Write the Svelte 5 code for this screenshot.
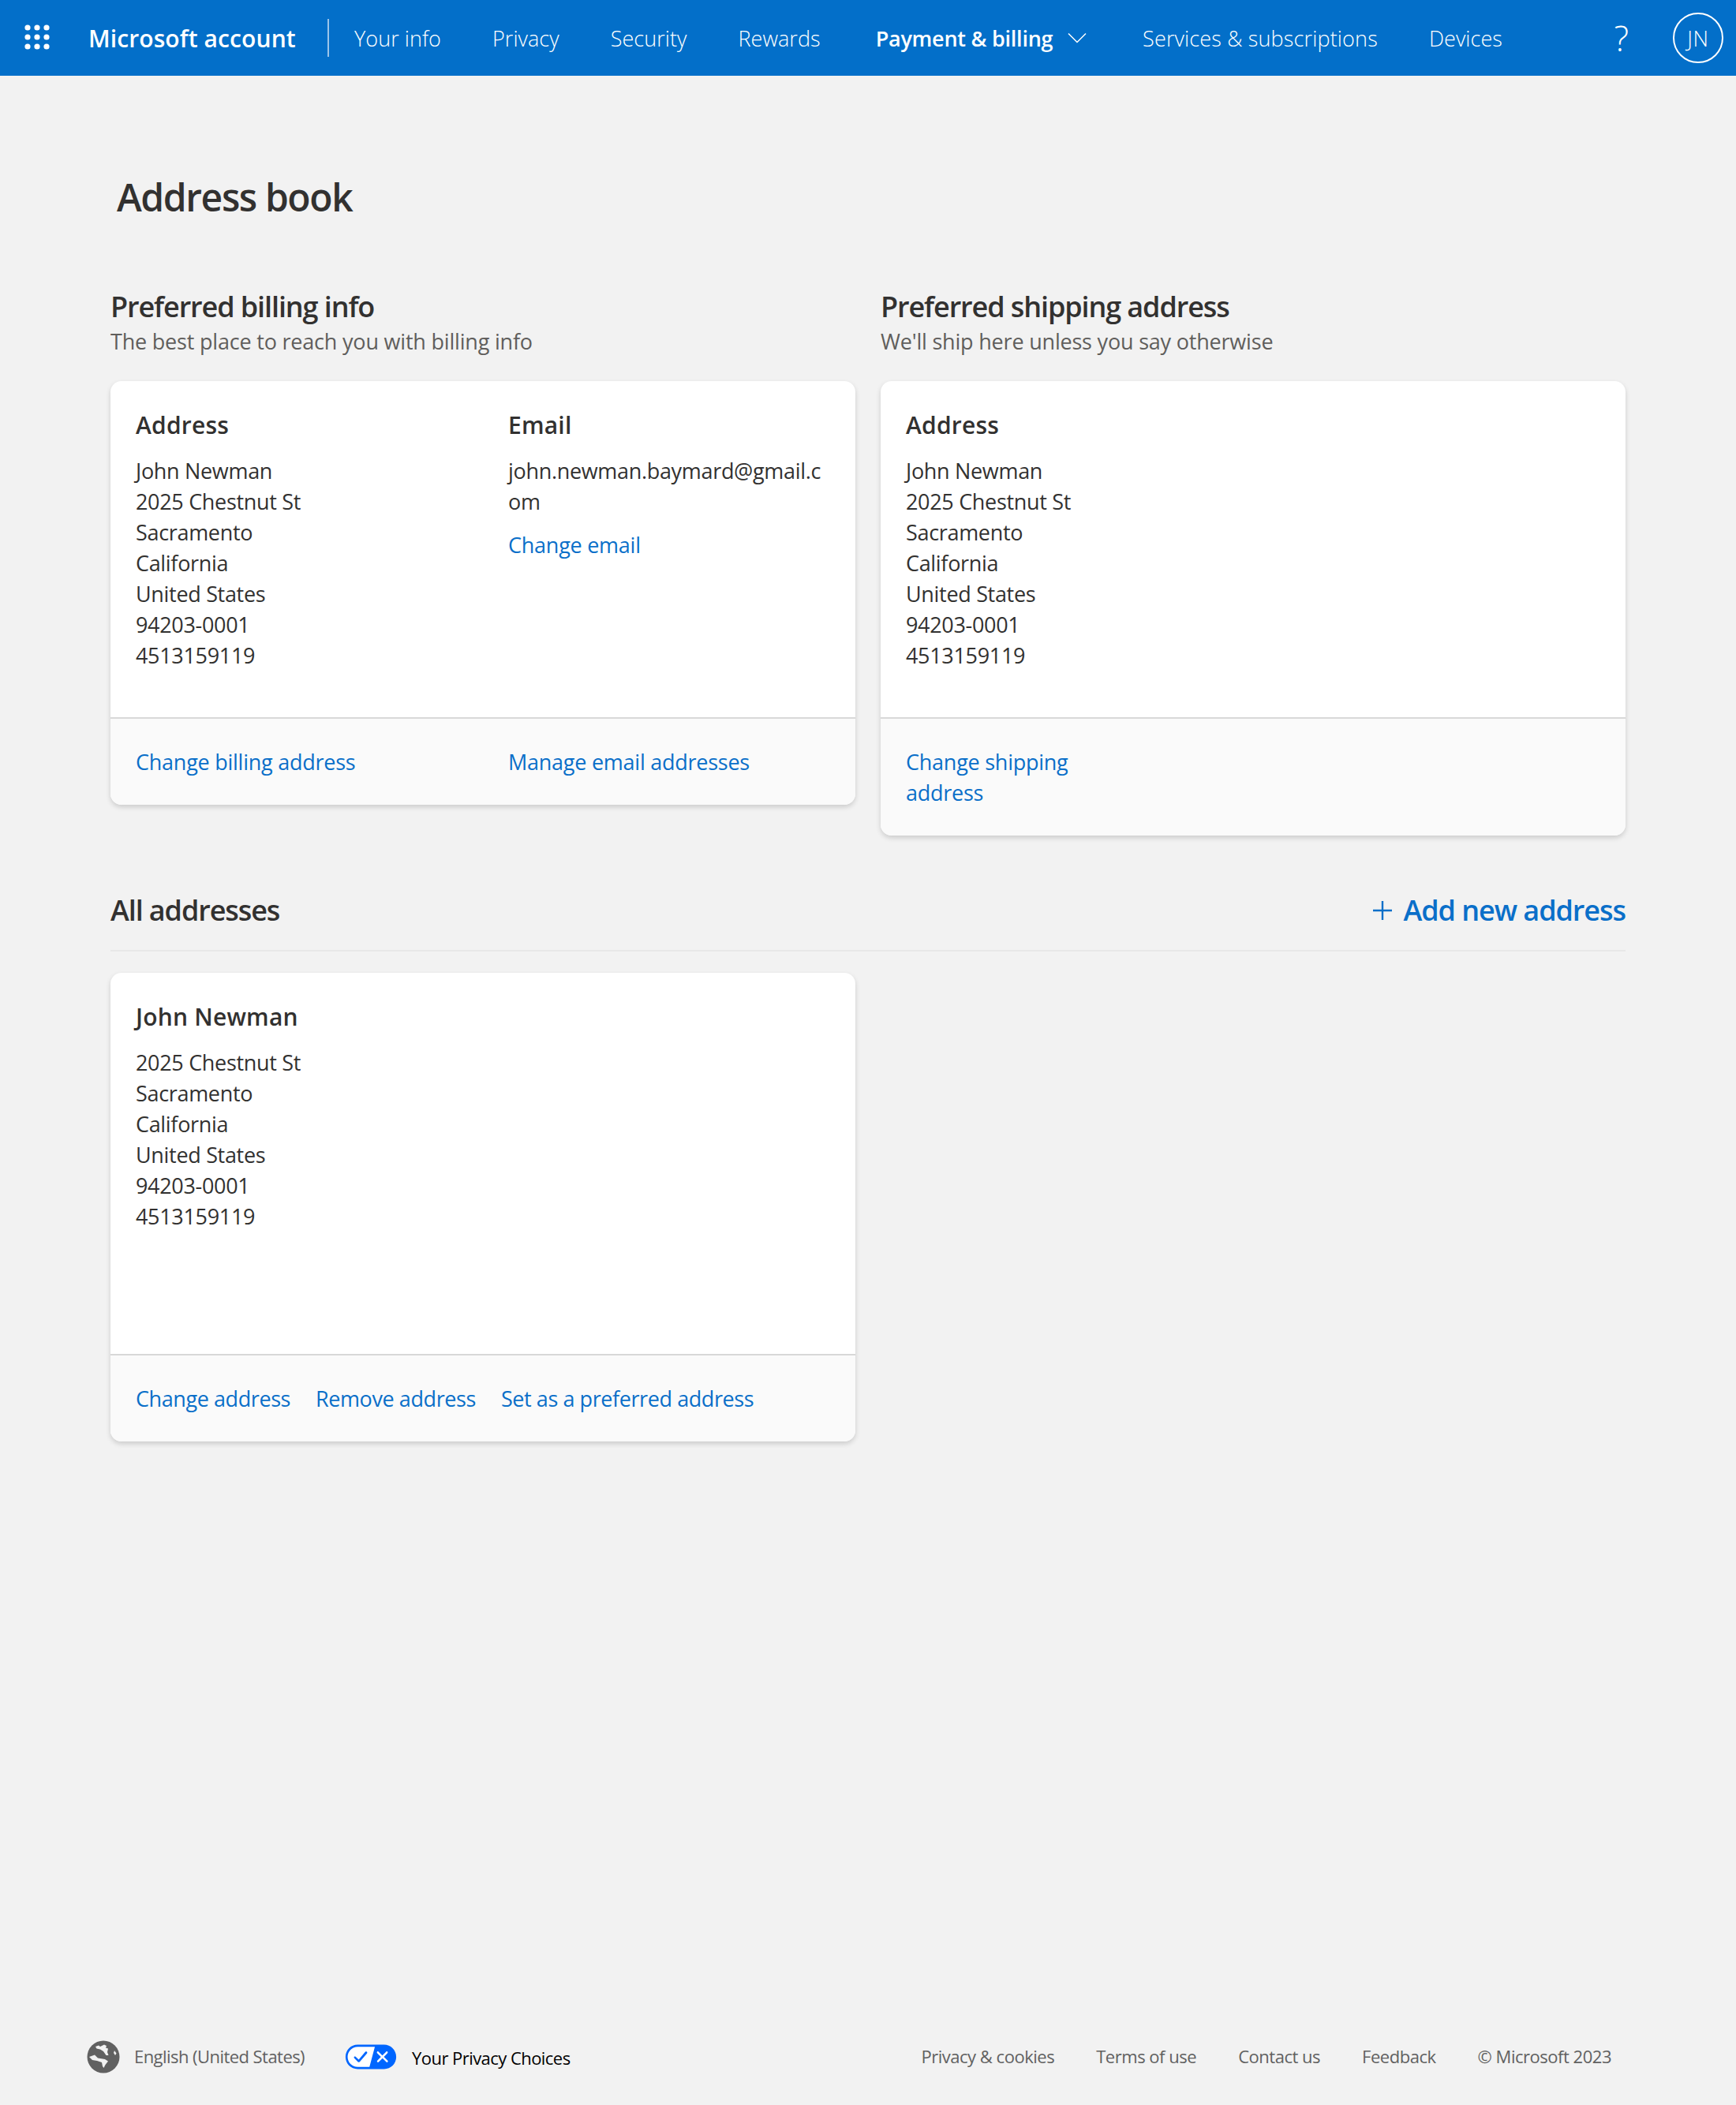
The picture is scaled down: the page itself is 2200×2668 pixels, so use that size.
<script>
	const navItems = ['Your info', 'Privacy', 'Security', 'Rewards']
	const addressLines = ['John Newman', '2025 Chestnut St', 'Sacramento', 'California', 'United States', '94203-0001', '4513159119']
	const footerLinks = ['Privacy & cookies', 'Terms of use', 'Contact us', 'Feedback', '© Microsoft 2023']
	const dots = [35, 47, 59]
</script>

<div class="page">
	<header class="topbar">
		<svg class="waffle" width="94" height="96" viewBox="0 0 94 96" aria-hidden="true">
			{#each dots as y}
				{#each dots as x}
					<circle cx={x} cy={y} r="3.6" fill="#fff" />
				{/each}
			{/each}
		</svg>
		<span class="brand">Microsoft account</span>
		<nav class="nav">
			{#each navItems as item}
				<span class="nav-item">{item}</span>
			{/each}
			<span class="nav-item current">
				Payment &amp; billing
				<svg width="24" height="14" viewBox="0 0 24 14" aria-hidden="true">
					<path d="M1 1.5 L12 12.5 L23 1.5" fill="none" stroke="#fff" stroke-width="1.5" />
				</svg>
			</span>
			<span class="nav-item services">Services &amp; subscriptions</span>
			<span class="nav-item">Devices</span>
		</nav>
		<span class="help">?</span>
		<span class="avatar">JN</span>
	</header>

	<main class="content">
		<h1>Address book</h1>

		<div class="two-col">
			<section>
				<h2>Preferred billing info</h2>
				<p class="sub">The best place to reach you with billing info</p>
				<div class="card">
					<div class="card-body split">
						<div>
							<h3>Address</h3>
							{#each addressLines as line}
								<div class="line">{line}</div>
							{/each}
						</div>
						<div>
							<h3>Email</h3>
							<div class="line email">john.newman.baymard@gmail.com</div>
							<a class="link change-email" href="#top">Change email</a>
						</div>
					</div>
					<div class="card-foot split">
						<a class="link" href="#top">Change billing address</a>
						<a class="link" href="#top">Manage email addresses</a>
					</div>
				</div>
			</section>

			<section>
				<h2>Preferred shipping address</h2>
				<p class="sub">We'll ship here unless you say otherwise</p>
				<div class="card">
					<div class="card-body">
						<h3>Address</h3>
						{#each addressLines as line}
							<div class="line">{line}</div>
						{/each}
					</div>
					<div class="card-foot">
						<a class="link narrow" href="#top">Change shipping address</a>
					</div>
				</div>
			</section>
		</div>

		<div class="all-head">
			<h2>All addresses</h2>
			<a class="add" href="#top">
				<svg width="24" height="24" viewBox="0 0 24 24" aria-hidden="true">
					<path d="M12 0 V24 M0 12 H24" stroke="#0a6fc9" stroke-width="2.4" fill="none" />
				</svg>
				Add new address
			</a>
		</div>

		<div class="two-col">
			<div class="card">
				<div class="card-body tall">
					<h3>{addressLines[0]}</h3>
					{#each addressLines.slice(1) as line}
						<div class="line">{line}</div>
					{/each}
				</div>
				<div class="card-foot row">
					<a class="link" href="#top">Change address</a>
					<a class="link" href="#top">Remove address</a>
					<a class="link" href="#top">Set as a preferred address</a>
				</div>
			</div>
		</div>
	</main>

	<footer class="footer">
		<div class="foot-left">
			<svg class="globe" width="42" height="42" viewBox="0 0 42 42" aria-hidden="true">
				<circle cx="21" cy="21" r="20.5" fill="#616161" />
				<path d="M11 8 L15 6.5 L17 8 L22 5.5 L25 7 L24 9.5 L27 10.5 L26 15 L27.5 19 L24.5 19 L21 14 L17 11.5 L12.5 10.5 Z" fill="#f2f2f2" />
				<path d="M3 21 L10 18.5 L14 22.5 L23 24 L27 26.5 L23.5 31 L21.5 35 L20 33 L19 28 L13 26 L7 25 Z" fill="#f2f2f2" />
				<path d="M35 13 L37.5 16.5 L36 19 L34 16 Z" fill="#f2f2f2" />
			</svg>
			<span class="lang">English (United States)</span>
			<svg class="toggle" width="66" height="32" viewBox="0 0 30 14" aria-hidden="true">
				<path fill-rule="evenodd" clip-rule="evenodd" d="M7.4 12.8h6.8l3.1-11.6H7.4C4.2 1.2 1.6 3.8 1.6 7s2.6 5.8 5.8 5.8z" fill="#fff" />
				<path fill-rule="evenodd" clip-rule="evenodd" d="M22.6 0H7.4c-3.9 0-7 3.1-7 7s3.1 7 7 7h15.2c3.9 0 7-3.1 7-7s-3.2-7-7-7zm-21 7c0-3.2 2.6-5.8 5.8-5.8h9.9l-3.1 11.6H7.4c-3.2 0-5.8-2.6-5.8-5.8z" fill="#06f" />
				<path d="M24.6 4c.2.2.2.6 0 .8L22.5 7l2.2 2.2c.2.2.2.6 0 .8-.2.2-.6.2-.8 0l-2.2-2.2L19.5 10c-.2.2-.6.2-.8 0-.2-.2-.2-.6 0-.8L20.8 7l-2.2-2.2c-.2-.2-.2-.6 0-.8.2-.2.6-.2.8 0l2.2 2.2L23.8 4c.2-.2.6-.2.8 0z" fill="#fff" />
				<path d="M12.7 4.1c.2.2.3.6.1.8L8.6 9.8c-.1.1-.2.2-.3.2-.2.1-.5.1-.7-.1L5.4 7.7c-.2-.2-.2-.6 0-.8.2-.2.6-.2.8 0L8 8.6l3.8-4.5c.2-.2.6-.2.9 0z" fill="#06f" />
			</svg>
			<span class="choices">Your Privacy Choices</span>
		</div>
		<div class="foot-right">
			{#each footerLinks as item}
				<span>{item}</span>
			{/each}
		</div>
	</footer>
</div>

<style>
	:global(body) {
		margin: 0;
		background: #f2f2f2;
		font-family: "Open Sans", "Liberation Sans", sans-serif;
		color: #323130;
	}

	.page {
		min-height: 2668px;
		display: flex;
		flex-direction: column;
	}

	.topbar {
		height: 96px;
		background: #036fc9;
		color: #fff;
		display: flex;
		align-items: center;
		font-size: 27px;
	}
	.waffle {
		width: 94px;
		flex: none;
	}
	.brand {
		width: 305px;
		box-sizing: border-box;
		font-size: 30px;
		font-weight: 600;
		height: 48px;
		line-height: 50px;
		border-right: 2px solid #9cc5e9;
		margin-right: 32px;
		margin-left: 18px;
		flex: none;
		letter-spacing: 0.1px;
	}
	.nav {
		display: flex;
		align-items: center;
		gap: 65px;
		font-weight: 300;
		letter-spacing: 0.05px;
	}
	.nav-item {
		display: flex;
		align-items: center;
		gap: 12px;
		white-space: pre;
	}
	.current {
		font-weight: 600;
		margin-left: 5px;
		letter-spacing: -0.25px;
	}
	.services {
		margin-left: 6px;
		letter-spacing: 0.15px;
	}
	.help {
		margin-left: auto;
		margin-right: 56px;
		font-size: 44px;
		font-weight: 300;
	}
	.avatar {
		width: 64px;
		height: 64px;
		box-sizing: border-box;
		border: 2px solid #fff;
		border-radius: 50%;
		display: flex;
		align-items: center;
		justify-content: center;
		margin-right: 16px;
		font-size: 27px;
		font-weight: 300;
		letter-spacing: 0.6px;
	}

	.content {
		padding: 0 140px;
	}
	h1 {
		font-size: 48px;
		font-weight: 600;
		line-height: 64px;
		margin: 122px 0 83px 8px;
		letter-spacing: -1.4px;
	}
	h2 {
		font-size: 36px;
		font-weight: 600;
		line-height: 48px;
		margin: 0;
		letter-spacing: -1.1px;
	}
	.sub {
		font-size: 27px;
		line-height: 39px;
		margin: 0 0 31px;
		color: #605e5c;
		letter-spacing: -0.2px;
	}
	.two-col {
		display: grid;
		grid-template-columns: 944px 944px;
		column-gap: 32px;
		align-items: start;
	}

	.card {
		background: #fff;
		border-radius: 14px;
		box-shadow: 0 3px 6px rgba(0, 0, 0, 0.16);
		overflow: hidden;
	}
	.card-body {
		padding: 32px 32px 0;
		height: 426px;
		box-sizing: border-box;
	}
	.card-body.tall {
		height: 483px;
	}
	.split {
		display: grid;
		grid-template-columns: 472px 1fr;
	}
	h3 {
		font-size: 30px;
		font-weight: 600;
		line-height: 48px;
		margin: 0 0 14px;
		letter-spacing: 0.2px;
	}
	.line {
		font-size: 27px;
		line-height: 39px;
		letter-spacing: -0.32px;
	}
	.email {
		width: 402px;
		word-break: break-all;
		margin-bottom: 16px;
	}
	.card-foot {
		background: #fafafa;
		border-top: 2px solid #d8d8d8;
		padding: 35px 32px;
		line-height: 39px;
	}
	.card-foot.row {
		display: flex;
		gap: 32px;
	}
	.row .link {
		letter-spacing: -0.42px;
	}
	.link {
		color: #0a6fc9;
		text-decoration: none;
		font-size: 27px;
		line-height: 39px;
		letter-spacing: -0.25px;
	}
	.narrow {
		display: block;
		width: 240px;
	}

	.all-head {
		display: flex;
		justify-content: space-between;
		align-items: center;
		margin-top: 70px;
		padding-bottom: 26px;
		border-bottom: 2px solid #e8e8e8;
		margin-bottom: 27px;
	}
	.add {
		color: #0a6fc9;
		text-decoration: none;
		font-size: 36px;
		font-weight: 600;
		letter-spacing: -1.05px;
		display: flex;
		align-items: center;
		gap: 14px;
	}

	.footer {
		margin-top: auto;
		padding: 0 158px 40px 110px;
		display: flex;
		justify-content: space-between;
		align-items: center;
		font-size: 22px;
		letter-spacing: -0.55px;
		color: #616161;
		height: 42px;
	}
	.foot-left {
		display: flex;
		align-items: center;
	}
	.lang {
		margin-left: 18px;
		margin-right: 51px;
		padding-bottom: 2px;
	}
	.choices {
		margin-left: 19px;
		color: #000;
		padding-top: 2px;
	}
	.foot-right {
		display: flex;
		gap: 53px;
		letter-spacing: -0.48px;
		padding-bottom: 2px;
	}
</style>
